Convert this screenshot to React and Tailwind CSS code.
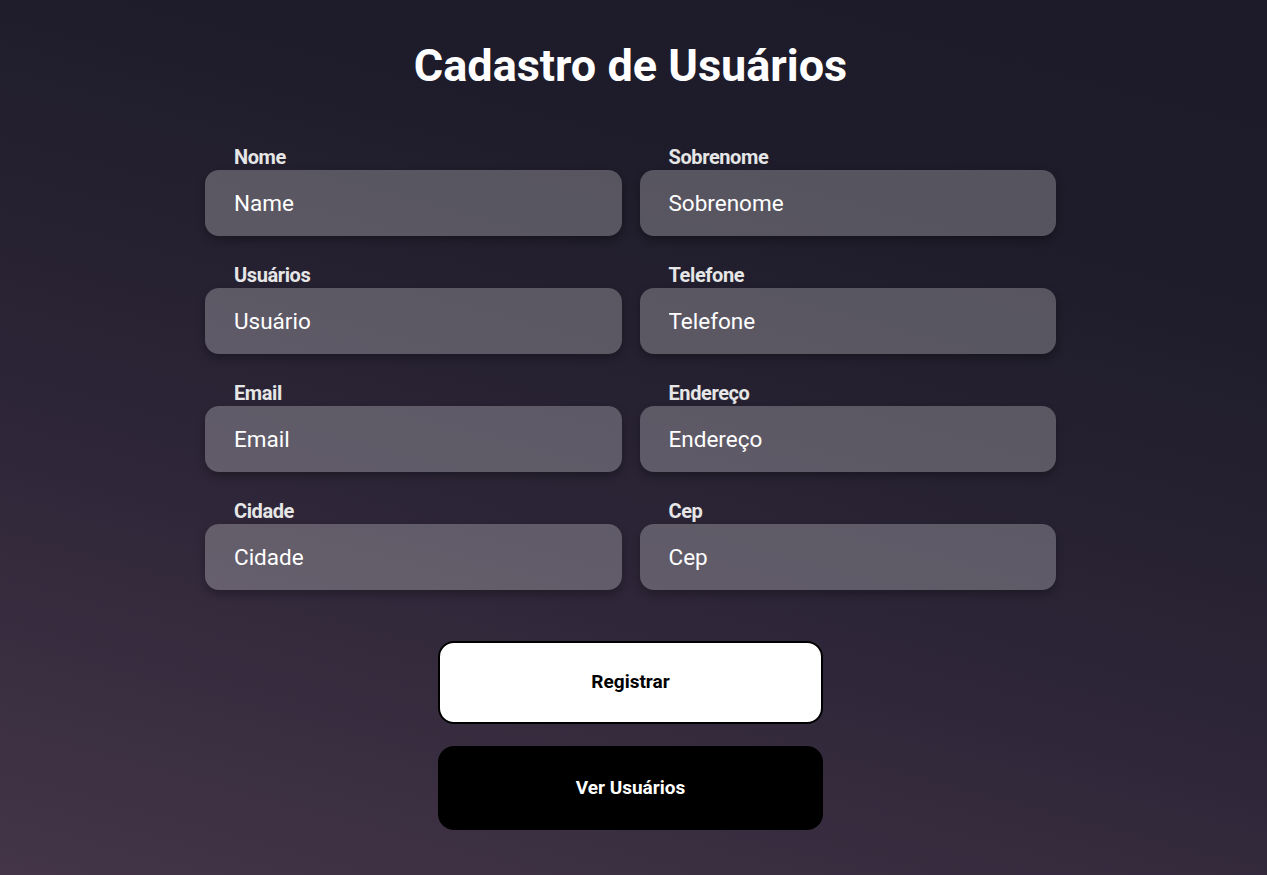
import React from "react";

const fields = [
  { label: "Nome", placeholder: "Name" },
  { label: "Sobrenome", placeholder: "Sobrenome" },
  { label: "Usuários", placeholder: "Usuário" },
  { label: "Telefone", placeholder: "Telefone" },
  { label: "Email", placeholder: "Email" },
  { label: "Endereço", placeholder: "Endereço" },
  { label: "Cidade", placeholder: "Cidade" },
  { label: "Cep", placeholder: "Cep" },
];

const App = () => {
  return (
    <div className="min-h-screen w-full bg-[linear-gradient(15deg,#443548_0%,#2c2537_40%,#1e1c2a_75%,#1d1b29_100%)] font-['Roboto',sans-serif]">
      <div className="w-[1261px] flex flex-col items-center pt-[38px] pb-[45px]">
        <h1 className="text-[45px] leading-[56px] font-bold text-white">
          Cadastro de Usuários
        </h1>

        <form className="mt-[52px] w-[851px] grid grid-cols-2 gap-x-[18px] gap-y-[28px]">
          {fields.map((f) => (
            <div key={f.label} className="flex flex-col">
              <label className="pl-[29px] text-[20px] leading-[22px] font-bold text-[#e6e6e6] tracking-[-0.4px]">
                {f.label}
              </label>
              <input
                type="text"
                placeholder={f.placeholder}
                className="mt-[2px] h-[66px] w-full rounded-[14px] bg-white/25 px-[29px] text-[22.5px] text-white placeholder:text-white shadow-[0_4px_8px_rgba(0,0,0,0.3)] outline-none"
              />
            </div>
          ))}
        </form>

        <button className="mt-[51px] w-[385px] h-[83px] rounded-[16px] bg-white border-2 border-black text-black text-[19px] font-bold">
          Registrar
        </button>
        <button className="mt-[22px] w-[385px] h-[84px] rounded-[16px] bg-black text-white text-[19px] font-bold">
          Ver Usuários
        </button>
      </div>
    </div>
  );
};

export default App;
